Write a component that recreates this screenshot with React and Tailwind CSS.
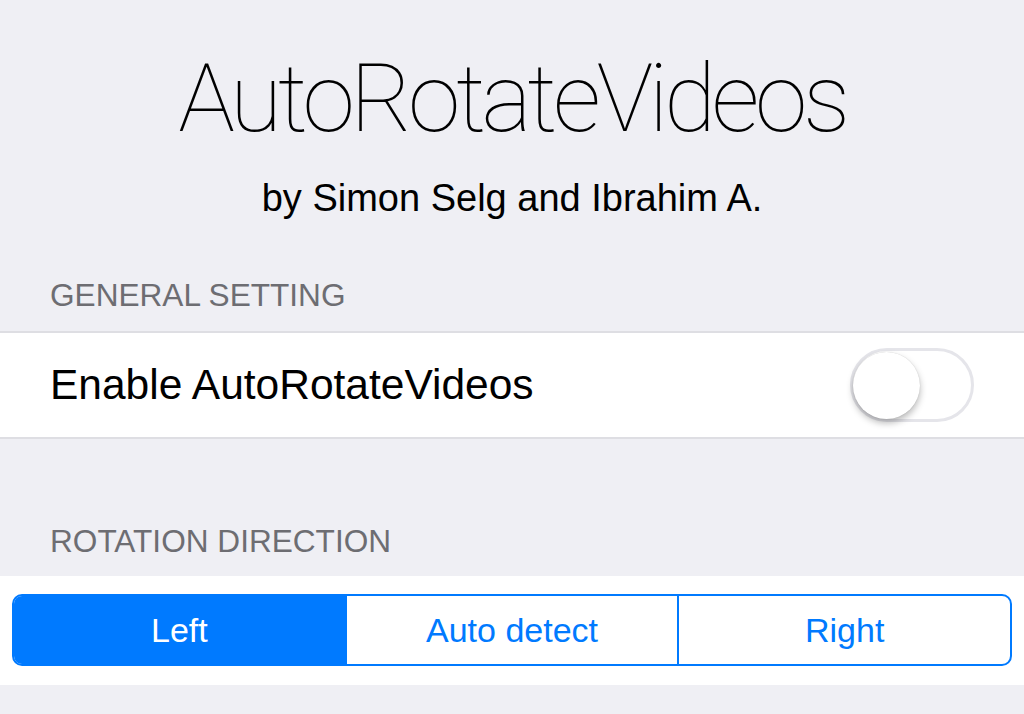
import React from "react";

export default function App() {
  return (
    <div
      className="min-h-[714px] w-[1024px] bg-[#efeff4] overflow-hidden"
      style={{ fontFamily: '"Liberation Sans", Arial, sans-serif' }}
    >
      <div className="pt-[49px] text-center">
        <div
          className="text-[95px] leading-[100px] text-black tracking-[-4.4px]"
          style={{ fontFamily: 'Roboto, "Liberation Sans", sans-serif', fontWeight: 100 }}
        >
          AutoRotateVideos
        </div>
        <div className="mt-[29px] text-[38px] leading-[40px] text-black">
          by Simon Selg and Ibrahim A.
        </div>
      </div>

      <div className="mt-[61px] px-[50px] text-[31.6px] leading-[32px] text-[#6d6d72]">
        GENERAL SETTING
      </div>
      <div className="mt-[20px] h-[108px] bg-white border-y-2 border-[#dedee3] flex items-center justify-between pl-[50px] pr-[50px]">
        <span className="text-[42.5px] leading-[48px] text-black">Enable AutoRotateVideos</span>
        <div className="relative w-[124px] h-[74px] rounded-full border-[3px] border-[#e5e5ea] bg-white">
          <div className="absolute left-0 top-[1px] w-[67px] h-[67px] rounded-full bg-white shadow-[0_4px_7px_rgba(0,0,0,0.28),0_0_1px_rgba(0,0,0,0.2)]" />
        </div>
      </div>

      <div className="mt-[86px] px-[50px] text-[31.6px] leading-[32px] text-[#6d6d72]">
        ROTATION DIRECTION
      </div>
      <div className="mt-[19px] h-[109px] bg-white px-[12px] pt-[18px]">
        <div className="flex h-[72px] rounded-[10px] border-2 border-[#007aff] overflow-hidden">
          <div className="flex-1 bg-[#007aff] text-white flex items-center justify-center text-[34px]">
            Left
          </div>
          <div className="flex-1 border-l-2 border-[#007aff] text-[#007aff] flex items-center justify-center text-[34px]">
            Auto detect
          </div>
          <div className="flex-1 border-l-2 border-[#007aff] text-[#007aff] flex items-center justify-center text-[34px]">
            Right
          </div>
        </div>
      </div>
    </div>
  );
}
